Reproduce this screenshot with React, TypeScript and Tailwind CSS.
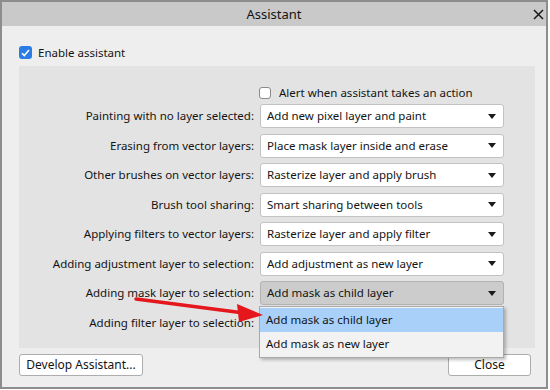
import { useState } from 'react';

const rows = [
  { label: 'Painting with no layer selected:', value: 'Add new pixel layer and paint' },
  { label: 'Erasing from vector layers:', value: 'Place mask layer inside and erase' },
  { label: 'Other brushes on vector layers:', value: 'Rasterize layer and apply brush' },
  { label: 'Brush tool sharing:', value: 'Smart sharing between tools' },
  { label: 'Applying filters to vector layers:', value: 'Rasterize layer and apply filter' },
  { label: 'Adding adjustment layer to selection:', value: 'Add adjustment as new layer' },
  { label: 'Adding mask layer to selection:', value: 'Add mask as child layer', open: true },
  // value hidden under the open list
  { label: 'Adding filter layer to selection:', value: '' },
];

function Caret() {
  return (
    <svg width="8" height="5" viewBox="0 0 8 5" className="shrink-0">
      <path d="M0 0h8L4 5z" fill="#1a1a1a" />
    </svg>
  );
}

function Check() {
  return (
    <span className="w-[13px] h-[13px] rounded-[3px] bg-[#2a7ce6] flex items-center justify-center">
      <svg width="9" height="8" viewBox="0 0 9 8">
        <path d="M1 4.2l2.3 2.3L8 1" stroke="white" strokeWidth="1.6" fill="none" />
      </svg>
    </span>
  );
}

export default function App() {
  const [enabled] = useState(true);

  return (
    <div
      className="w-[550px] h-[390px] bg-white text-[#141414] text-[11.5px] leading-none"
      style={{ fontFamily: '"Noto Sans", "Open Sans", sans-serif' }}
    >
      <div className="relative w-[548px] h-[389px] border-2 border-[#8d8d8d] bg-[#eeeeee] flex flex-col">
        <div className="h-[24px] bg-[#c9c9c9] flex items-center justify-center relative shrink-0">
          <span className="text-[13px]">Assistant</span>
          <svg width="11" height="11" viewBox="0 0 11 11" className="absolute right-[2px] top-[7px]">
            <path d="M1 1l9 9M10 1l-9 9" stroke="#1a1a1a" strokeWidth="1.5" />
          </svg>
        </div>

        <div className="px-[17px] pt-[20px] flex items-center gap-[6px]">
          {enabled && <Check />}
          <span>Enable assistant</span>
        </div>

        <div className="mt-[7px] ml-[17px] w-[516px] h-[282px] bg-[#e3e3e3] pt-[21px]">
          <div className="flex items-center gap-[8px] pl-[240px] h-[12px]">
            <span className="w-[12px] h-[12px] rounded-[3px] border border-[#8a8a8a] bg-white" />
            <span>Alert when assistant takes an action</span>
          </div>
          <div className="mt-[5px] flex flex-col gap-[5.5px]">
            {rows.map((r) => (
              <div key={r.label} className="relative flex items-center h-[24px]">
                <div className="w-[241px] text-right pr-[6px]">{r.label}</div>
                <div
                  className={`w-[244px] h-[24px] rounded-[3px] border flex items-center justify-between pl-[6px] pr-[7px] ${
                    r.open ? 'bg-[#cccccc] border-[#b2b2b2]' : 'bg-white border-[#c2c2c2]'
                  }`}
                >
                  <span>{r.value}</span>
                  <Caret />
                </div>
                {r.open && (
                  <div className="absolute left-[240px] top-[25px] w-[245px] z-10 bg-[#f2f2f2] border border-[#a9a9a9] shadow-[2px_2px_3px_rgba(0,0,0,0.25)] py-[1px]">
                    <div className="h-[24px] bg-[#a8d0f8] flex items-center pl-[6px]">Add mask as child layer</div>
                    <div className="h-[24px] flex items-center pl-[6px]">Add mask as new layer</div>
                  </div>
                )}
              </div>
            ))}
          </div>
        </div>

        <div className="mt-[6px] pl-[17px] pr-[15px] flex justify-between">
          <button className="h-[22px] w-[124px] bg-white border border-[#adadad] rounded-[3px] text-[12px]">
            Develop Assistant...
          </button>
          <button className="h-[22px] w-[83px] bg-white border border-[#adadad] rounded-[3px] text-[12px]">
            Close
          </button>
        </div>

        <svg className="absolute left-0 top-0 pointer-events-none z-20" width="548" height="389" viewBox="0 0 548 389">
          <path d="M134 297 L242 311" stroke="#e5161c" strokeWidth="3.5" strokeLinecap="round" />
          <path d="M261 313 L235 302 L237 320 Z" fill="#e5161c" />
        </svg>
      </div>
    </div>
  );
}
